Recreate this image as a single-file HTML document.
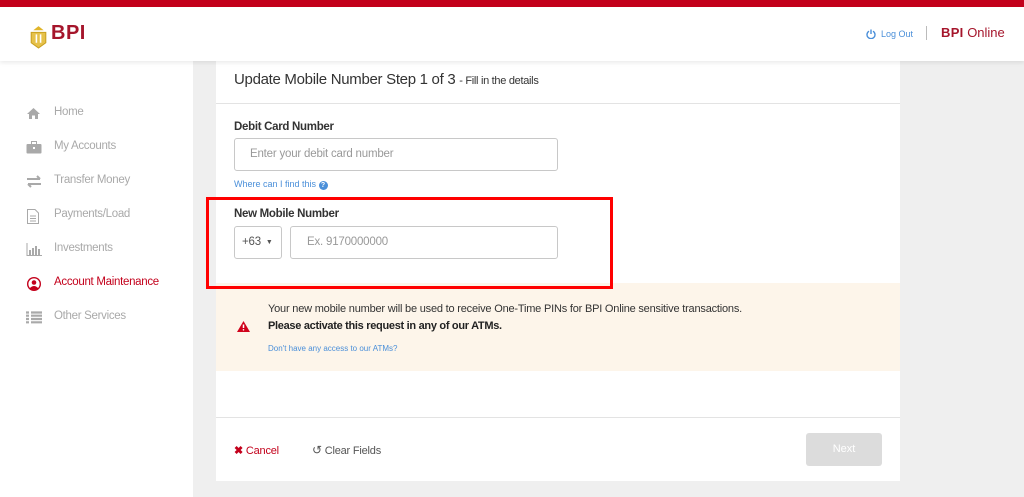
<!DOCTYPE html>
<html><head><style>
*{box-sizing:border-box;margin:0;padding:0}
body{width:1024px;height:497px;overflow:hidden;background:#efefef;font-family:"Liberation Sans",sans-serif;position:relative}
.top{position:absolute;left:0;top:0;width:1024px;height:7px;background:#c3001b}
.hdr{position:absolute;left:0;top:7px;width:1024px;height:54px;background:#fff;box-shadow:0 2px 4px rgba(0,0,0,.08);z-index:2}
.side{position:absolute;left:0;top:61px;width:193px;height:436px;background:#fff}
.nav{position:absolute;left:26px;font-size:11.5px;color:#a9a9a9;letter-spacing:-.3px}
.nav i{position:absolute;left:0;top:0;width:16px;height:13px}
.nav span{position:absolute;left:28px;top:-1px;white-space:nowrap}
.card{position:absolute;left:216px;top:61px;width:684px;height:420px;background:#fff}
.t{position:absolute;left:18px;top:10px;font-size:15px;color:#333;letter-spacing:-.3px}
.t small{font-size:11px}
.lbl{position:absolute;font-size:11.5px;font-weight:bold;color:#333;letter-spacing:-.3px}
.inp{position:absolute;border:1px solid #c8c8c8;border-radius:3px;font-size:11.5px;color:#999;letter-spacing:-.2px;white-space:nowrap}
.warn{position:absolute;left:0;top:222px;width:684px;height:88px;background:#fdf5ea}
</style></head><body>
<div class="top"></div>
<div class="hdr">
 <svg style="position:absolute;left:30px;top:17px" width="17" height="25" viewBox="0 0 16 24"><path d="M3 6 L8 2 L13 6 Z" fill="#e0b52a"/><path d="M1 8 H15 V18 L8 23 L1 18 Z" fill="#e6c14a" stroke="#c9a020" stroke-width="1"/><path d="M6 10 V18 M10 10 V18" stroke="#fff" stroke-width="1.5"/></svg>
 <div style="position:absolute;left:51px;top:15px;font-size:20px;font-weight:bold;color:#a5152b;letter-spacing:.5px">BPI</div>
 <svg style="position:absolute;left:866px;top:22px" width="10" height="10" viewBox="0 0 10 10"><path d="M3 2.2 A4 4 0 1 0 7 2.2" fill="none" stroke="#4a8fd9" stroke-width="1.4"/><path d="M5 0.5 V5" stroke="#4a8fd9" stroke-width="1.4"/></svg>
 <div style="position:absolute;left:881px;top:22px;font-size:9px;color:#4a8fd9">Log Out</div>
 <div style="position:absolute;left:926px;top:19px;width:1px;height:14px;background:#bbb"></div>
 <div style="position:absolute;left:941px;top:18px;font-size:13px;color:#a5152b"><b style="letter-spacing:.3px">BPI</b> Online</div>
</div>
<div class="side">
 <div class="nav" style="top:46px"><i><svg width="15" height="13" viewBox="0 0 15 13"><path d="M7.5 1 L14 7 H12 V12 H9 V8.5 H6 V12 H3 V7 H1 Z" fill="#a9a9a9"/></svg></i><span>Home</span></div>
 <div class="nav" style="top:80px"><i><svg width="16" height="13" viewBox="0 0 16 13"><rect x="0.5" y="3" width="15" height="9.5" rx="1" fill="#a9a9a9"/><rect x="5.5" y="0.5" width="5" height="3" fill="none" stroke="#a9a9a9"/><rect x="7" y="6" width="2" height="2" fill="#fff"/></svg></i><span>My Accounts</span></div>
 <div class="nav" style="top:114px"><i><svg width="16" height="13" viewBox="0 0 16 13"><path d="M1 4 H14 M11 1 L14 4 M15 9 H2 M5 12 L2 9" stroke="#a9a9a9" stroke-width="2" fill="none"/></svg></i><span>Transfer Money</span></div>
 <div class="nav" style="top:148px"><i><svg width="14" height="15" viewBox="0 0 14 15"><path d="M1.5 0.5 H9 L12.5 4 V14.5 H1.5 Z" fill="none" stroke="#a9a9a9"/><path d="M4 7 H10 M4 9.5 H10 M4 12 H10" stroke="#a9a9a9"/></svg></i><span>Payments/Load</span></div>
 <div class="nav" style="top:182px"><i><svg width="16" height="13" viewBox="0 0 16 13"><path d="M1 0 V12.5 H16" stroke="#a9a9a9" fill="none"/><path d="M4 7 V12 M7 5 V12 M10 3 V12 M13 6 V12" stroke="#a9a9a9" stroke-width="2"/></svg></i><span>Investments</span></div>
 <div class="nav" style="top:215px;color:#c3001b"><i><svg width="16" height="16" viewBox="0 0 16 16"><circle cx="8" cy="8" r="7" fill="#c3001b"/><circle cx="8" cy="8" r="5.6" fill="#fff"/><circle cx="8" cy="6.5" r="2.3" fill="#c3001b"/><path d="M3.5 12.5 Q8 7.5 12.5 12.5 Q8 15 3.5 12.5Z" fill="#c3001b"/></svg></i><span style="top:0">Account Maintenance</span></div>
 <div class="nav" style="top:250px"><i><svg width="16" height="13" viewBox="0 0 16 13"><path d="M0 1.5 H3 M5 1.5 H16 M0 4.7 H3 M5 4.7 H16 M0 8 H3 M5 8 H16 M0 11.3 H3 M5 11.3 H16" stroke="#a9a9a9" stroke-width="2.2"/></svg></i><span>Other Services</span></div>
</div>
<div class="card">
 <div class="t">Update Mobile Number Step 1 of 3 <small>- Fill in the details</small></div>
 <div style="position:absolute;left:0;top:42px;width:684px;height:1px;background:#e3e3e3"></div>
 <div class="lbl" style="left:18px;top:60px">Debit Card Number</div>
 <div class="inp" style="left:18px;top:77px;width:324px;height:33px;padding:9px 15px">Enter your debit card number</div>
 <div style="position:absolute;left:18px;top:118px;font-size:9px;color:#4a8fd9">Where can I find this <span style="display:inline-block;width:9px;height:9px;border-radius:50%;background:#4a8fd9;color:#fff;font-size:7px;font-weight:bold;text-align:center;line-height:9px">?</span></div>
 <div class="lbl" style="left:18px;top:147px">New Mobile Number</div>
 <div class="inp" style="left:18px;top:165px;width:48px;height:33px;padding:9px 0 0 7px;color:#555">+63 <span style="font-size:7px;margin-left:2px;vertical-align:1px">▼</span></div>
 <div class="inp" style="left:74px;top:165px;width:268px;height:33px;padding:9px 16px">Ex. 9170000000</div>
 <div class="warn">
  <svg style="position:absolute;left:21px;top:38px" width="13" height="11" viewBox="0 0 13 11"><path d="M6.5 0 L13 11 H0 Z" fill="#d0021b"/><path d="M6.5 3.5 V7" stroke="#fff" stroke-width="1.5"/><circle cx="6.5" cy="8.8" r=".8" fill="#fff"/></svg>
  <div style="position:absolute;left:52px;top:20px;font-size:11px;color:#333;letter-spacing:-.2px">Your new mobile number will be used to receive One-Time PINs for BPI Online sensitive transactions.</div>
  <div style="position:absolute;left:52px;top:37px;font-size:11px;font-weight:bold;color:#222;letter-spacing:-.3px">Please activate this request in any of our ATMs.</div>
  <div style="position:absolute;left:52px;top:61px;font-size:8px;color:#4a8fd9">Don't have any access to our ATMs?</div>
 </div>
 <div style="position:absolute;left:0;top:356px;width:684px;height:1px;background:#e3e3e3"></div>
 <div style="position:absolute;left:18px;top:383px;font-size:11px;color:#c3001b;letter-spacing:-.2px"><b>✖</b> Cancel</div>
 <div style="position:absolute;left:96px;top:382px;font-size:11px;color:#555;letter-spacing:-.2px"><span style="font-size:12px">↺</span> Clear Fields</div>
 <div style="position:absolute;left:590px;top:372px;width:76px;height:33px;background:#dcdcdc;border-radius:3px;color:#fff;font-size:11px;text-align:center;line-height:33px">Next</div>
</div>
<div style="position:absolute;left:206px;top:197px;width:407px;height:92px;border:3px solid #f00"></div>
</body></html>
